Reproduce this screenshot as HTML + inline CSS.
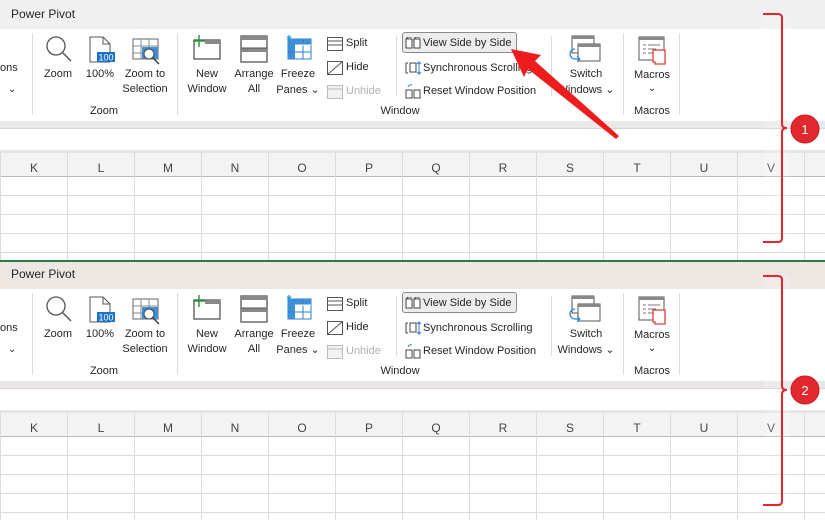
<!DOCTYPE html>
<html><head><meta charset="utf-8"><style>
*{margin:0;padding:0;box-sizing:border-box}
body{width:825px;height:521px;overflow:hidden;background:#fff;font-family:"Liberation Sans",sans-serif;color:#262626;position:relative}
.win{position:absolute;left:0;width:825px;height:260px;overflow:hidden;background:#fff}
.t{position:absolute;font-size:11px;white-space:nowrap}
.c{position:absolute;font-size:11px;white-space:nowrap;text-align:center;transform:translateX(-50%)}
.sep{position:absolute;width:1px;background:#dcdcdc}
svg{position:absolute}
.col{position:absolute;top:161px;font-size:12px;color:#444;transform:translateX(-50%)}
</style></head><body>

<div class="win" style="top:0">
 <div style="position:absolute;left:0;top:0;width:825px;height:29px;background:#f0f0f0"></div>
 <div class="t" style="left:11px;top:7px;font-size:12px">Power Pivot</div>
 <div style="position:absolute;left:0;top:121px;width:825px;height:8px;background:#e9e9e9;border-bottom:1px solid #d4d4d4"></div>
 <div style="position:absolute;left:0;top:150px;width:825px;height:3px;background:#e4e4e4"></div>
 <div style="position:absolute;left:0;top:153px;width:825px;height:24px;background:#f3f3f3;border-bottom:1px solid #b8b8b8"></div>
</div>

<div class="win" style="top:260px">
 <div style="position:absolute;left:0;top:0;width:825px;height:2px;background:#2f7a45"></div>
 <div style="position:absolute;left:0;top:2px;width:825px;height:27px;background:#ede7e4"></div>
 <div class="t" style="left:11px;top:7px;font-size:12px">Power Pivot</div>
 <div style="position:absolute;left:0;top:121px;width:825px;height:8px;background:#e9e6e5;border-bottom:1px solid #d4d4d4"></div>
 <div style="position:absolute;left:0;top:150px;width:825px;height:3px;background:#e8e4e3"></div>
 <div style="position:absolute;left:0;top:153px;width:825px;height:24px;background:#f3f3f3;border-bottom:1px solid #b8b8b8"></div>
</div>

<script>
(function(){
 var wins=document.querySelectorAll('.win');
 var ribbon=`
 <div class="t" style="left:0;top:62px">ons</div>
 <div class="t" style="left:8px;top:84px;font-size:10px">⌄</div>
 <div class="sep" style="left:32px;top:33px;height:82px"></div>
 <svg style="left:44px;top:35px" width="30" height="30"><circle cx="12" cy="11" r="9" fill="none" stroke="#555" stroke-width="1.3"/><line x1="18.5" y1="17.5" x2="27" y2="26" stroke="#555" stroke-width="1.5"/></svg>
 <div class="c" style="left:58px;top:68px">Zoom</div>
 <svg style="left:88px;top:36px" width="28" height="28"><path d="M2 1H15L22 8V26H2Z" fill="#fff" stroke="#555"/><path d="M15 1V8H22" fill="none" stroke="#555"/><rect x="9" y="16" width="18" height="10" fill="#1a73c8"/><text x="18" y="24.5" font-size="9" fill="#fff" text-anchor="middle" font-family="Liberation Sans">100</text></svg>
 <div class="c" style="left:100px;top:68px">100%</div>
 <svg style="left:132px;top:38px" width="30" height="28"><rect x="1" y="1" width="25" height="20" fill="#fff" stroke="#666"/><line x1="1" y1="8" x2="26" y2="8" stroke="#888"/><line x1="1" y1="15" x2="26" y2="15" stroke="#888"/><line x1="9" y1="1" x2="9" y2="21" stroke="#888"/><line x1="17" y1="1" x2="17" y2="21" stroke="#888"/><rect x="10" y="9" width="16" height="12" fill="#3d8fd8"/><circle cx="17" cy="16" r="5" fill="#fff" stroke="#444"/><line x1="20.5" y1="19.5" x2="27" y2="26" stroke="#444" stroke-width="1.5"/></svg>
 <div class="c" style="left:145px;top:68px">Zoom to</div>
 <div class="c" style="left:145px;top:83px">Selection</div>
 <div class="c" style="left:104px;top:105px">Zoom</div>
 <div class="sep" style="left:177px;top:33px;height:82px"></div>
 <svg style="left:191px;top:33px" width="32" height="28"><rect x="3" y="7" width="26" height="19" fill="#fff" stroke="#555" stroke-width="1.3"/><rect x="14" y="7" width="15" height="4" fill="#888"/><line x1="8" y1="2" x2="8" y2="14" stroke="#2a9a3a" stroke-width="1.5"/><line x1="2" y1="8" x2="14" y2="8" stroke="#2a9a3a" stroke-width="1.5"/></svg>
 <div class="c" style="left:207px;top:68px">New</div>
 <div class="c" style="left:207px;top:83px">Window</div>
 <svg style="left:240px;top:35px" width="28" height="28"><rect x="1" y="1" width="26" height="26" fill="#fff" stroke="#555" stroke-width="1.3"/><rect x="1" y="1" width="26" height="4" fill="#888"/><rect x="1" y="13" width="26" height="4" fill="#888"/><line x1="1" y1="13" x2="27" y2="13" stroke="#555"/></svg>
 <div class="c" style="left:254px;top:68px">Arrange</div>
 <div class="c" style="left:254px;top:83px">All</div>
 <svg style="left:283px;top:33px" width="30" height="28"><rect x="5" y="6" width="23" height="20" fill="#fff" stroke="#2a7fd0"/><rect x="5" y="6" width="23" height="6" fill="#3d8fd8"/><rect x="5" y="6" width="7" height="20" fill="#3d8fd8"/><line x1="5" y1="19" x2="28" y2="19" stroke="#2a7fd0"/><line x1="20" y1="6" x2="20" y2="26" stroke="#2a7fd0"/><line x1="12" y1="12" x2="28" y2="12" stroke="#fff"/><text x="6" y="11" font-size="13" fill="#2a9ad8" text-anchor="middle" font-family="Liberation Sans" font-weight="bold">*</text></svg>
 <div class="c" style="left:298px;top:68px">Freeze</div>
 <div class="c" style="left:298px;top:83px">Panes ⌄</div>
 <svg style="left:327px;top:37px" width="16" height="14"><rect x="0.5" y="0.5" width="15" height="13" fill="#fff" stroke="#555"/><line x1="0" y1="4" x2="16" y2="4" stroke="#555"/><line x1="0" y1="8" x2="16" y2="8" stroke="#555"/></svg>
 <div class="t" style="left:346px;top:37px">Split</div>
 <svg style="left:327px;top:61px" width="16" height="14"><rect x="0.5" y="0.5" width="15" height="13" fill="#fff" stroke="#555"/><line x1="1" y1="13" x2="15" y2="1" stroke="#555"/></svg>
 <div class="t" style="left:346px;top:61px">Hide</div>
 <svg style="left:327px;top:85px" width="16" height="14"><rect x="0.5" y="0.5" width="15" height="13" fill="#f2f2f2" stroke="#bbb"/><line x1="0" y1="4" x2="16" y2="4" stroke="#bbb"/></svg>
 <div class="t" style="left:346px;top:85px;color:#b0b0b0">Unhide</div>
 <div class="sep" style="left:396px;top:36px;height:60px"></div>
 <div style="position:absolute;left:402px;top:32px;width:115px;height:21px;border:1.5px solid #8a8a8a;border-radius:3px;background:#ededed"></div>
 <svg style="left:405px;top:37px" width="16" height="12"><path d="M1 2H7V11H1Z M9 2H15V11H9Z" fill="#fff" stroke="#444"/><path d="M1 2L3 0H7 M9 2L11 0H15" fill="none" stroke="#444"/></svg>
 <div class="t" style="left:423px;top:37px">View Side by Side</div>
 <svg style="left:405px;top:61px" width="16" height="14"><path d="M3 2H1V12H3 M5 2H11V11H5Z" fill="none" stroke="#444"/><line x1="14" y1="1" x2="14" y2="13" stroke="#2a7fd0"/><path d="M12 3L14 1L16 3M12 11L14 13L16 11" fill="none" stroke="#2a7fd0"/></svg>
 <div class="t" style="left:423px;top:62px">Synchronous Scrolling</div>
 <svg style="left:405px;top:83px" width="16" height="16"><path d="M3 4A3 3 0 0 1 7 2" fill="none" stroke="#2a7fd0"/><path d="M1 7H7V15H1Z M9 7H15V15H9Z" fill="#fff" stroke="#444"/></svg>
 <div class="t" style="left:423px;top:85px">Reset Window Position</div>
 <div class="c" style="left:400px;top:105px">Window</div>
 <div class="sep" style="left:551px;top:36px;height:60px"></div>
 <svg style="left:569px;top:35px" width="34" height="30"><rect x="3" y="1" width="22" height="17" fill="#fff" stroke="#555"/><rect x="3" y="1" width="22" height="3" fill="#888"/><rect x="9" y="9" width="22" height="17" fill="#fff" stroke="#555"/><rect x="9" y="9" width="22" height="3" fill="#888"/><path d="M6 14A5 5 0 0 0 6 24H10" fill="none" stroke="#2a8ad8" stroke-width="1.3"/><path d="M8 21L11 24L8 27" fill="none" stroke="#2a8ad8"/></svg>
 <div class="c" style="left:586px;top:68px">Switch</div>
 <div class="c" style="left:586px;top:83px">Windows ⌄</div>
 <div class="sep" style="left:623px;top:33px;height:82px"></div>
 <svg style="left:638px;top:36px" width="30" height="30"><rect x="1" y="1" width="25" height="23" fill="#fff" stroke="#555"/><rect x="1" y="1" width="25" height="3" fill="#888"/><line x1="5" y1="9" x2="8" y2="9" stroke="#777"/><line x1="10" y1="9" x2="22" y2="9" stroke="#777"/><line x1="5" y1="13" x2="8" y2="13" stroke="#777"/><line x1="10" y1="13" x2="18" y2="13" stroke="#777"/><line x1="5" y1="17" x2="8" y2="17" stroke="#777"/><line x1="10" y1="17" x2="16" y2="17" stroke="#777"/><path d="M15 14H27V28H17V26H15Z" fill="#fff" stroke="#e23b3b" stroke-width="1.3"/></svg>
 <div class="c" style="left:652px;top:69px">Macros</div>
 <div class="c" style="left:652px;top:83px;font-size:10px">⌄</div>
 <div class="c" style="left:652px;top:105px">Macros</div>
 <div class="sep" style="left:679px;top:33px;height:82px"></div>`;
 var cols="KLMNOPQRSTUV",g='';
 for(var i=0;i<12;i++){g+='<div class="col" style="left:'+(34+i*67)+'px">'+cols[i]+'</div>';}
 for(var i=0;i<13;i++){g+='<div style="position:absolute;left:'+(i*67)+'px;top:153px;width:1px;height:110px;background:#dadada"></div>';}
 for(var r=0;r<5;r++){g+='<div style="position:absolute;left:0;top:'+(195+r*19)+'px;width:825px;height:1px;background:#dcdcdc"></div>';}
 wins.forEach(function(w){w.insertAdjacentHTML('beforeend',ribbon+g);});
})();
</script>

<svg style="left:0;top:0" width="825" height="521">
 <rect x="764" y="14" width="26" height="228" fill="#fff" opacity="0.18"/>
 <path d="M763 14H778Q782 14 782 18V124Q782 128 787 128Q782 128 782 132V238Q782 242 778 242H763" fill="none" stroke="#e8232b" stroke-width="2"/>
 <circle cx="805" cy="129" r="14" fill="#e0282d" stroke="#c81e24"/>
 <text x="805" y="134" font-size="13" fill="#fff" text-anchor="middle" font-family="Liberation Sans">1</text>
 <rect x="764" y="276" width="26" height="230" fill="#fff" opacity="0.18"/>
 <path d="M763 276H778Q782 276 782 280V386Q782 390 787 390Q782 390 782 394V501Q782 505 778 505H763" fill="none" stroke="#e8232b" stroke-width="2"/>
 <circle cx="805" cy="390" r="14" fill="#e0282d" stroke="#c81e24"/>
 <text x="805" y="395" font-size="13" fill="#fff" text-anchor="middle" font-family="Liberation Sans">2</text>
 <path d="M511 49L541 55L535 61L619 136L616 139L528 69L524 77Z" fill="#ee1c1c"/>
</svg>
</body></html>
